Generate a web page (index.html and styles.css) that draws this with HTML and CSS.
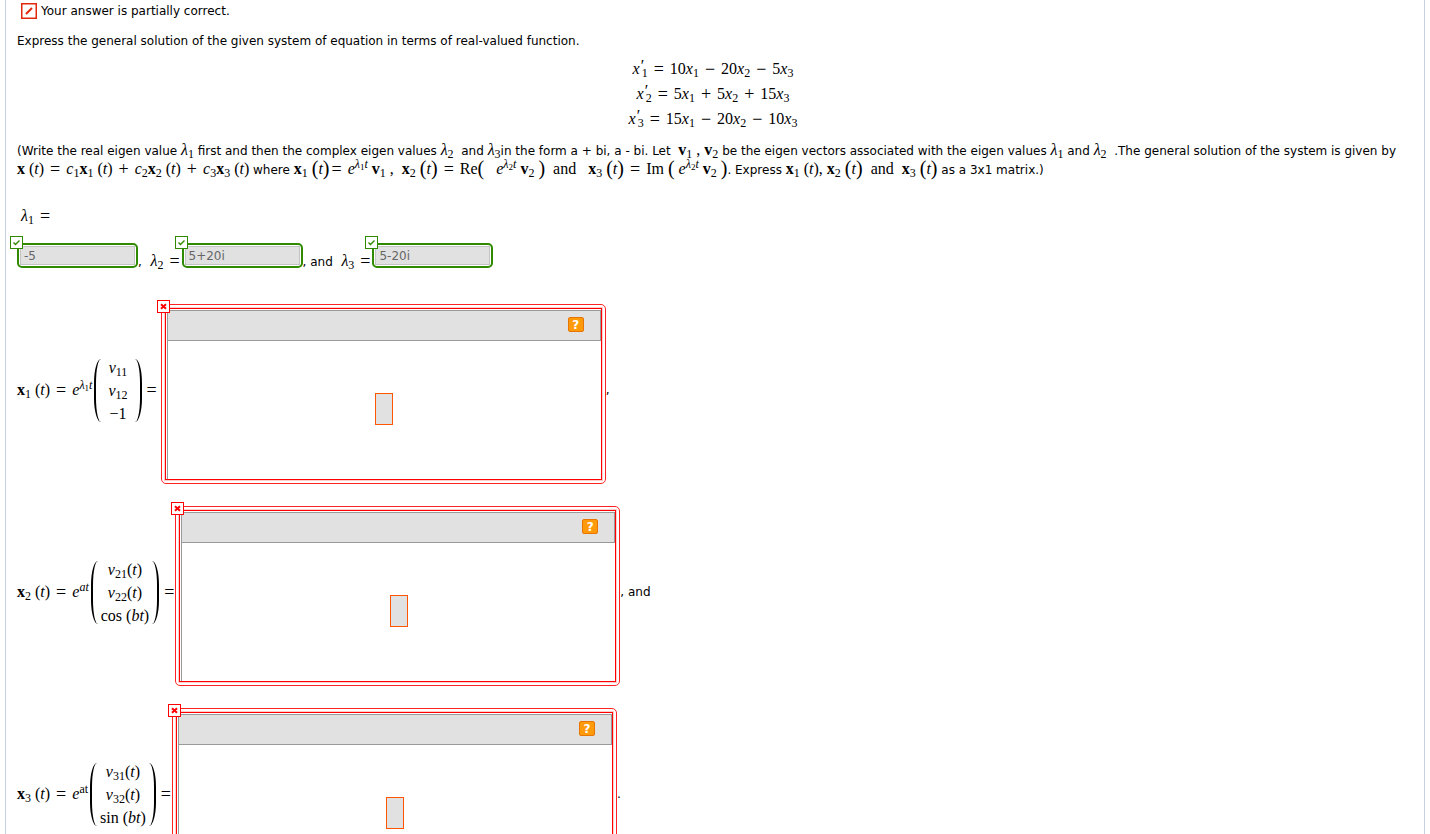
FILE: index.html
```
<!DOCTYPE html>
<html lang="en">
<head>
<meta charset="utf-8">
<title>Question</title>
<link rel="stylesheet" href="styles.css">
</head>
<body>
<main class="question">
  <p class="status">
    <svg class="status-icon" width="16" height="16" viewBox="0 0 16 16" aria-hidden="true"><rect x=".75" y=".75" width="14.5" height="14.5" fill="#fff" stroke="#e0290b" stroke-width="1.5"/><path d="M5 11L11 5" stroke="#e0290b" stroke-width="2"/></svg>
    <span>Your answer is partially correct.</span>
  </p>
  <p class="intro">Express the general solution of the given system of equation in terms of real-valued function.</p>

  <div class="system math">
    <div><i>x</i><sup class="prime">′</sup><sub>1</sub> <b class="op">=</b> 10<i>x</i><sub>1</sub> <b class="op">−</b> 20<i>x</i><sub>2</sub> <b class="op">−</b> 5<i>x</i><sub>3</sub></div>
    <div><i>x</i><sup class="prime">′</sup><sub>2</sub> <b class="op">=</b> 5<i>x</i><sub>1</sub> <b class="op">+</b> 5<i>x</i><sub>2</sub> <b class="op">+</b> 15<i>x</i><sub>3</sub></div>
    <div><i>x</i><sup class="prime">′</sup><sub>3</sub> <b class="op">=</b> 15<i>x</i><sub>1</sub> <b class="op">−</b> 20<i>x</i><sub>2</sub> <b class="op">−</b> 10<i>x</i><sub>3</sub></div>
  </div>

  <div class="details">
    <p>(Write the real eigen value <span class="math"><i>λ</i><sub>1</sub></span> first and then the complex eigen values <span class="math"><i>λ</i><sub>2</sub></span>&nbsp; and <span class="math"><i>λ</i><sub>3</sub></span>in the form a + bi, a - bi. Let&nbsp; <span class="math"><strong>v</strong><sub>1</sub> , <strong>v</strong><sub>2</sub></span> be the eigen vectors associated with the eigen values <span class="math"><i>λ</i><sub>1</sub></span> and <span class="math"><i>λ</i><sub>2</sub></span>&nbsp; .The general solution of the system is given by</p>
    <p><span class="math"><strong>x</strong> (<i>t</i>) <b class="op">=</b> <i>c</i><sub>1</sub><strong>x</strong><sub>1</sub> (<i>t</i>) <b class="op">+</b> <i>c</i><sub>2</sub><strong>x</strong><sub>2</sub> (<i>t</i>) <b class="op">+</b> <i>c</i><sub>3</sub><strong>x</strong><sub>3</sub> (<i>t</i>)</span> where <span class="math"><strong>x</strong><sub>1</sub> <span class="paren">(</span><i>t</i><span class="paren">)</span><b class="op">=</b> <i>e</i><sup><i>λ</i><small>1</small><i>t</i></sup> <strong>v</strong><sub>1</sub> ,&nbsp; <strong>x</strong><sub>2</sub> <span class="paren">(</span><i>t</i><span class="paren">)</span> <b class="op">=</b> Re<span class="paren">(</span>&nbsp;&nbsp; <i>e</i><sup><i>λ</i><small>2</small><i>t</i></sup> <strong>v</strong><sub>2</sub> <span class="paren">)</span>&nbsp; and&nbsp;&nbsp; <strong>x</strong><sub>3</sub> <span class="paren">(</span><i>t</i><span class="paren">)</span> <b class="op">=</b> Im <span class="paren">(</span> <i>e</i><sup><i>λ</i><small>2</small><i>t</i></sup> <strong>v</strong><sub>2</sub> <span class="paren">)</span></span>. Express <span class="math"><strong>x</strong><sub>1</sub> (<i>t</i>), <strong>x</strong><sub>2</sub> <span class="paren">(</span><i>t</i><span class="paren">)</span>&nbsp; and&nbsp; <strong>x</strong><sub>3</sub> <span class="paren">(</span><i>t</i><span class="paren">)</span></span> as a 3x1 matrix.)</p>
  </div>

  <label class="lead math" for="l1"><i>λ</i><sub>1</sub> <b class="op">=</b></label>

  <div class="answers">
    <span class="field"><svg class="badge" width="13" height="13" viewBox="0 0 13 13"><rect x=".5" y=".5" width="12" height="12" fill="#fff" stroke="#2f8a00"/><path d="M3.5 6.5L5.5 8.5L9.5 4.5" fill="none" stroke="#2f8a00" stroke-width="1.4"/></svg><input id="l1" type="text" value="-5"></span>
    <label for="l2">,&nbsp; <span class="math"><i>λ</i><sub>2</sub> <b class="op">=</b></span></label>
    <span class="field"><svg class="badge" width="13" height="13" viewBox="0 0 13 13"><rect x=".5" y=".5" width="12" height="12" fill="#fff" stroke="#2f8a00"/><path d="M3.5 6.5L5.5 8.5L9.5 4.5" fill="none" stroke="#2f8a00" stroke-width="1.4"/></svg><input id="l2" type="text" value="5+20i"></span>
    <label for="l3">, and&nbsp; <span class="math"><i>λ</i><sub>3</sub> <b class="op">=</b></span></label>
    <span class="field"><svg class="badge" width="13" height="13" viewBox="0 0 13 13"><rect x=".5" y=".5" width="12" height="12" fill="#fff" stroke="#2f8a00"/><path d="M3.5 6.5L5.5 8.5L9.5 4.5" fill="none" stroke="#2f8a00" stroke-width="1.4"/></svg><input id="l3" type="text" value="5-20i"></span>
  </div>

  <section class="row">
    <div class="formula math">
      <span><strong>x</strong><sub>1</sub> (<i>t</i>) <b class="op">=</b> <i>e</i><sup><i>λ</i><small>1</small><i>t</i></sup></span>
      <span class="matrix wide"><span><i>v</i><sub>11</sub></span><span><i>v</i><sub>12</sub></span><span>−1</span></span>
      <b class="op eq">=</b>
    </div>
    <div class="editor"><svg class="badge" width="13" height="13" viewBox="0 0 13 13"><rect x=".5" y=".5" width="12" height="12" fill="#fff" stroke="#f00"/><path d="M4 4.3L9 8.7M9 4.3L4 8.7" stroke="#f00" stroke-width="2"/></svg>
      <div class="editor-inner"><div class="toolbar"><button type="button" class="help">?</button></div><div class="canvas"><input class="slot" type="text" aria-label="Matrix answer x1"></div></div>
    </div>
    <span class="tail">,</span>
  </section>

  <section class="row">
    <div class="formula math">
      <span><strong>x</strong><sub>2</sub> (<i>t</i>) <b class="op">=</b> <i>e</i><sup><i>at</i></sup></span>
      <span class="matrix"><span><i>v</i><sub>21</sub>(<i>t</i>)</span><span><i>v</i><sub>22</sub>(<i>t</i>)</span><span>cos (<i>bt</i>)</span></span>
      <b class="op eq">=</b>
    </div>
    <div class="editor"><svg class="badge" width="13" height="13" viewBox="0 0 13 13"><rect x=".5" y=".5" width="12" height="12" fill="#fff" stroke="#f00"/><path d="M4 4.3L9 8.7M9 4.3L4 8.7" stroke="#f00" stroke-width="2"/></svg>
      <div class="editor-inner"><div class="toolbar"><button type="button" class="help">?</button></div><div class="canvas"><input class="slot" type="text" aria-label="Matrix answer x2"></div></div>
    </div>
    <span class="tail">, and</span>
  </section>

  <section class="row">
    <div class="formula math">
      <span><strong>x</strong><sub>3</sub> (<i>t</i>) <b class="op">=</b> <i>e</i><sup>at</sup></span>
      <span class="matrix"><span><i>v</i><sub>31</sub>(<i>t</i>)</span><span><i>v</i><sub>32</sub>(<i>t</i>)</span><span>sin (<i>bt</i>)</span></span>
      <b class="op eq">=</b>
    </div>
    <div class="editor"><svg class="badge" width="13" height="13" viewBox="0 0 13 13"><rect x=".5" y=".5" width="12" height="12" fill="#fff" stroke="#f00"/><path d="M4 4.3L9 8.7M9 4.3L4 8.7" stroke="#f00" stroke-width="2"/></svg>
      <div class="editor-inner"><div class="toolbar"><button type="button" class="help">?</button></div><div class="canvas"><input class="slot" type="text" aria-label="Matrix answer x3"></div></div>
    </div>
    <span class="tail">.</span>
  </section>
</main>
</body>
</html>
```
FILE: styles.css
```
* { box-sizing: border-box; }
html { height: 100%; overflow: hidden; }
body {
  height: 100%;
  margin: 0;
  overflow: hidden;
  background: #fff;
  color: #000;
  font: 12px/20px Verdana, "DejaVu Sans", sans-serif;
}
p { margin: 0; }
.question {
  margin: 0 5px;
  padding: 0 11px 20px;
  border: solid #c5d0e0;
  border-width: 0 1px;
}
.status { display: flex; align-items: center; gap: 4px; padding: 1px 0 0 4px; }
.intro { margin-top: 10px; }

.math { font-family: "Liberation Serif", "Times New Roman", serif; font-size: 16px; white-space: nowrap; }
.math sub, .math sup { font-size: 12px; line-height: 0; }
.math sub { vertical-align: -3px; }
.math sup { vertical-align: 6px; }
.math small { font-size: 9px; vertical-align: -2px; }
.op { font-size: 18px; font-weight: normal; line-height: 0; margin: 0 2px; vertical-align: -1px; }
.paren { font-size: 20px; line-height: 0; vertical-align: -1px; }
.math .prime { display: inline-block; width: 2px; font-size: 16px; font-style: italic; vertical-align: 3px; }

.system { display: flex; flex-direction: column; align-items: center; margin-top: 5px; padding-right: 4px; line-height: 25px; }
.details { margin-top: 9px; line-height: 19px; white-space: nowrap; }
.details p { height: 19px; }
.lead { display: block; margin-top: 28px; padding-left: 4px; line-height: 20px; }

.answers { display: flex; align-items: flex-end; margin-top: 17px; }
.answers label { margin-bottom: -2px; line-height: 15px; white-space: nowrap; }
.answers .math { padding-left: 1px; }
.field {
  position: relative;
  display: flex;
  width: 121px;
  height: 25px;
  padding: 1px;
  border: 2px solid #2f8a00;
  border-radius: 5px;
}
.field input {
  width: 100%;
  padding: 0 3px;
  border: 1px solid #c4c4c4;
  background: #e1e1e1;
  color: #666;
  font: inherit;
}
.badge { position: absolute; top: -9px; left: -9px; }

.row { display: flex; align-items: center; margin-top: 22px; }
.answers + .row { margin-top: 36px; }
.formula { display: flex; align-items: center; padding-bottom: 8px; }
.matrix {
  position: relative;
  display: flex;
  flex-direction: column;
  align-items: center;
  margin-left: 2px;
  padding: 0 10px;
  line-height: 23px;
}
.wide { padding: 0 14px; }
.matrix::before, .matrix::after {
  content: "";
  position: absolute;
  top: 3px;
  bottom: 3px;
  width: 7px;
}
.matrix::before { left: 0; border-left: 2px solid #000; border-radius: 7px 0 0 7px / 24px 0 0 24px; }
.matrix::after { right: 0; border-right: 2px solid #000; border-radius: 0 7px 7px 0 / 0 24px 24px 0; }
.eq { margin: 0 1px 0 5px; }
.wide + .eq { margin-right: 4px; }

.editor {
  position: relative;
  width: 445px;
  height: 180px;
  padding: 3px;
  border: 1px solid #f22;
  border-radius: 5px;
}
.editor .badge { top: -5px; left: -5px; }
.editor-inner {
  display: flex;
  flex-direction: column;
  height: 100%;
  padding: 1px 0 0 1px;
  border: 1px solid #f00;
  box-shadow: 0 0 0 1px #fcc;
}
.toolbar {
  display: flex;
  justify-content: flex-end;
  align-items: center;
  height: 31px;
  padding: 0 16px 2px 0;
  border: 1px solid #999;
  background: #e1e1e1;
}
.help {
  width: 16px;
  height: 15px;
  padding: 0;
  border: 1px solid #e87500;
  border-radius: 2px;
  background: #ff9a0a;
  color: #fff;
  font: bold 12px/12px "DejaVu Sans", sans-serif;
}
.canvas { display: flex; flex: 1; justify-content: center; align-items: center; padding-bottom: 2px; border-left: 1px solid #999; }
.slot { width: 18px; height: 32px; padding: 0; border: 1px solid #f50; background: #e1e1e1; }
.tail { padding: 0 0 8px; }
```
